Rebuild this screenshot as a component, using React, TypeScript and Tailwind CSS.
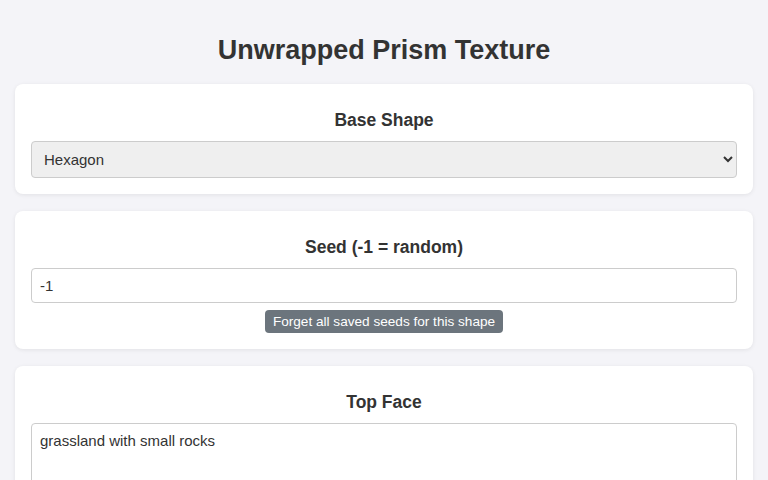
import React from "react";

const shapes = ["Triangle", "Square", "Pentagon", "Hexagon", "Octagon"];

function Card({ label, children }: { label: string; children: React.ReactNode }) {
  return (
    <section className="bg-white rounded-lg shadow-[0_1px_4px_rgba(0,0,0,0.08)] p-4">
      <h2 className="text-center text-[17.5px] font-bold leading-[21px] mt-[10px] mb-[10px]">{label}</h2>
      {children}
    </section>
  );
}

export default function App() {
  const [shape, setShape] = React.useState("Hexagon");
  const [seed, setSeed] = React.useState("-1");
  const [top, setTop] = React.useState("grassland with small rocks");

  return (
    <div
      className="min-h-screen bg-[#f4f4f8] text-[#333] px-[15px] pb-8"
      style={{ fontFamily: '"Liberation Sans", Arial, sans-serif' }}
    >
      <h1 className="text-center text-[27px] font-bold leading-[30px] pt-[35px] mb-[19px]">
        Unwrapped Prism Texture
      </h1>

      <div className="flex flex-col gap-[17px]">
        <Card label="Base Shape">
          <select
            value={shape}
            onChange={(e) => setShape(e.target.value)}
            className="block w-full h-[37px] bg-[#efefef] border border-[#ccc] rounded px-2 text-[15px] text-[#333]"
          >
            {shapes.map((s) => (
              <option key={s}>{s}</option>
            ))}
          </select>
        </Card>

        <Card label="Seed (-1 = random)">
          <input
            value={seed}
            onChange={(e) => setSeed(e.target.value)}
            className="block w-full h-[35px] border border-[#ccc] rounded px-2 text-[15px] text-[#333] bg-white"
          />
          <div className="flex justify-center mt-[7px]">
            <button className="bg-[#6c757d] text-white text-[13.6px] leading-[15px] px-2 py-1 rounded">
              Forget all saved seeds for this shape
            </button>
          </div>
        </Card>

        <Card label="Top Face">
          <textarea
            value={top}
            onChange={(e) => setTop(e.target.value)}
            rows={4}
            className="block w-full border border-[#ccc] rounded p-2 text-[15px] leading-[18px] text-[#333] bg-white resize-y"
          />
        </Card>
      </div>
    </div>
  );
}
